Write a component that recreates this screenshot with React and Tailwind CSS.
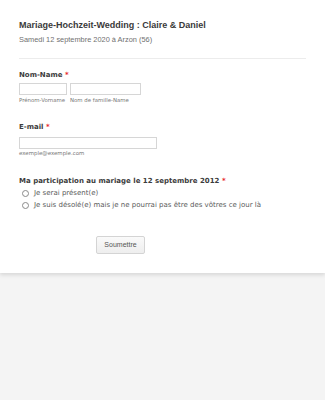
import React from 'react';

const sans = "font-['DejaVu_Sans',Verdana,sans-serif]";
const arial = "font-['Liberation_Sans',Arial,sans-serif]";

function Label({ children }) {
  return (
    <div className={`${sans} text-[7px] leading-[10px] font-bold text-[#3c3c3c]`}>
      {children} <span className="text-[#e8262b]">*</span>
    </div>
  );
}

function Radio({ label }) {
  return (
    <div className="flex items-center h-[11.5px] pl-[3px] gap-[5px]">
      <span className="w-[7px] h-[7px] rounded-full border border-[#8a8a8a] bg-white" />
      <span className={`${sans} text-[7px] leading-[11px] text-[#5a5a5a]`}>{label}</span>
    </div>
  );
}

export default function App() {
  return (
    <div className="min-h-screen bg-[#f4f4f4]">
      <div className="bg-white px-[19px] pt-[19px] pb-[19px] shadow-[0_2px_4px_rgba(0,0,0,0.12)]">
        {/* header */}
        <h1 className={`${arial} text-[9px] leading-[12px] font-bold text-[#3a3a3a]`}>
          Mariage-Hochzeit-Wedding : Claire &amp; Daniel
        </h1>
        <p className={`${arial} mt-[4px] text-[7.4px] leading-[10px] text-[#707070]`}>
          Samedi 12 septembre 2020 à Arzon (56)
        </p>
        <div className="mt-[13px] h-px bg-[#ececec]" />

        {/* name */}
        <div className="mt-[11px]">
          <Label>Nom-Name</Label>
          <div className="mt-[3px] flex gap-[3px]">
            <div className="flex flex-col">
              <div className="w-[48px] h-[12px] border border-[#d6d6d6] bg-white" />
              <span className={`${sans} mt-[2px] text-[5.4px] leading-[7px] text-[#777]`}>Prénom-Vorname</span>
            </div>
            <div className="flex flex-col">
              <div className="w-[71px] h-[12px] border border-[#d6d6d6] bg-white" />
              <span className={`${sans} mt-[2px] text-[5.4px] leading-[7px] text-[#777]`}>Nom de famille-Name</span>
            </div>
          </div>
        </div>

        {/* email */}
        <div className="mt-[18px]">
          <Label>E-mail</Label>
          <div className="mt-[5px] w-[138px] h-[12px] border border-[#d6d6d6] bg-white" />
          <div className={`${sans} mt-[1px] text-[5.45px] leading-[7px] text-[#777]`}>exemple@exemple.com</div>
        </div>

        {/* participation */}
        <div className="mt-[19px]">
          <Label>Ma participation au mariage le 12 septembre 2012</Label>
          <div className="mt-[2px] flex flex-col">
            <Radio label="Je serai présent(e)" />
            <Radio label="Je suis désolé(e) mais je ne pourrai pas être des vôtres ce jour là" />
          </div>
        </div>

        <div className="mt-[25px] ml-[77px] flex">
          <button className={`${arial} w-[49px] h-[18px] rounded-[2px] border border-[#d4d4d4] bg-gradient-to-b from-[#fafafa] to-[#eeeeee] text-[7px] leading-[16px] text-[#555]`}>
            Soumettre
          </button>
        </div>
      </div>
    </div>
  );
}
